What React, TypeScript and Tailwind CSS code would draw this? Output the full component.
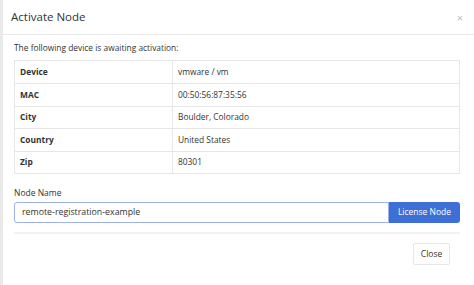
const ROWS: { label: string; value: string }[] = [
  { label: 'Device', value: 'vmware / vm' },
  { label: 'MAC', value: '00:50:56:87:35:56' },
  { label: 'City', value: 'Boulder, Colorado' },
  { label: 'Country', value: 'United States' },
  { label: 'Zip', value: '80301' },
]

export default function App() {
  return (
    <div className="w-[474px] h-[285px] overflow-hidden bg-[#e9e9e9] pl-[3px] font-['Open_Sans',sans-serif] text-[#333]">
      <div className="h-full bg-white">
        {/* header */}
        <div className="h-[35px] border-b border-[#e8e8e8] flex items-center justify-between pl-[8px] pr-[11px]">
          <span className="text-[11.5px] leading-none">Activate Node</span>
          <span className="text-[11px] leading-none text-[#bbb]">×</span>
        </div>

        {/* body */}
        <div className="pl-[11px] pr-[14px]">
          <p className="pt-[6px] text-[8.4px] leading-[13px]">The following device is awaiting activation:</p>

          <div className="mt-[6px] border border-[#e6e6e6]">
            {ROWS.map((row, i) => (
              <div
                key={row.label}
                className={`grid grid-cols-[158px_1fr] h-[22.4px] text-[8.4px] ${i > 0 ? 'border-t border-[#e6e6e6]' : ''}`}
              >
                <div className="flex items-center pl-[5px] font-bold border-r border-[#e6e6e6]">{row.label}</div>
                <div className="flex items-center pl-[5px]">{row.value}</div>
              </div>
            ))}
          </div>

          <div className="mt-[12px] text-[8.5px] leading-[13px]">Node Name</div>
          <div className="mt-[3px] flex h-[21px]">
            <input
              readOnly
              value="remote-registration-example"
              className="flex-1 min-w-0 h-full rounded-l-[3px] border border-[#9fb2ec] px-[7px] text-[8.8px] text-[#333] outline-none"
            />
            <button className="w-[71px] h-full rounded-r-[3px] bg-[#3d6fd6] text-white text-[8.5px]">License Node</button>
          </div>

          <div className="mt-[9px] h-[2px] bg-[#f2f2f2]" />

          <div className="mt-[9px] flex justify-end pr-[10px]">
            <button className="h-[22px] w-[37px] border border-[#e6e6e6] rounded-[2px] text-[8.5px] text-[#333]">Close</button>
          </div>
        </div>
      </div>
    </div>
  )
}
